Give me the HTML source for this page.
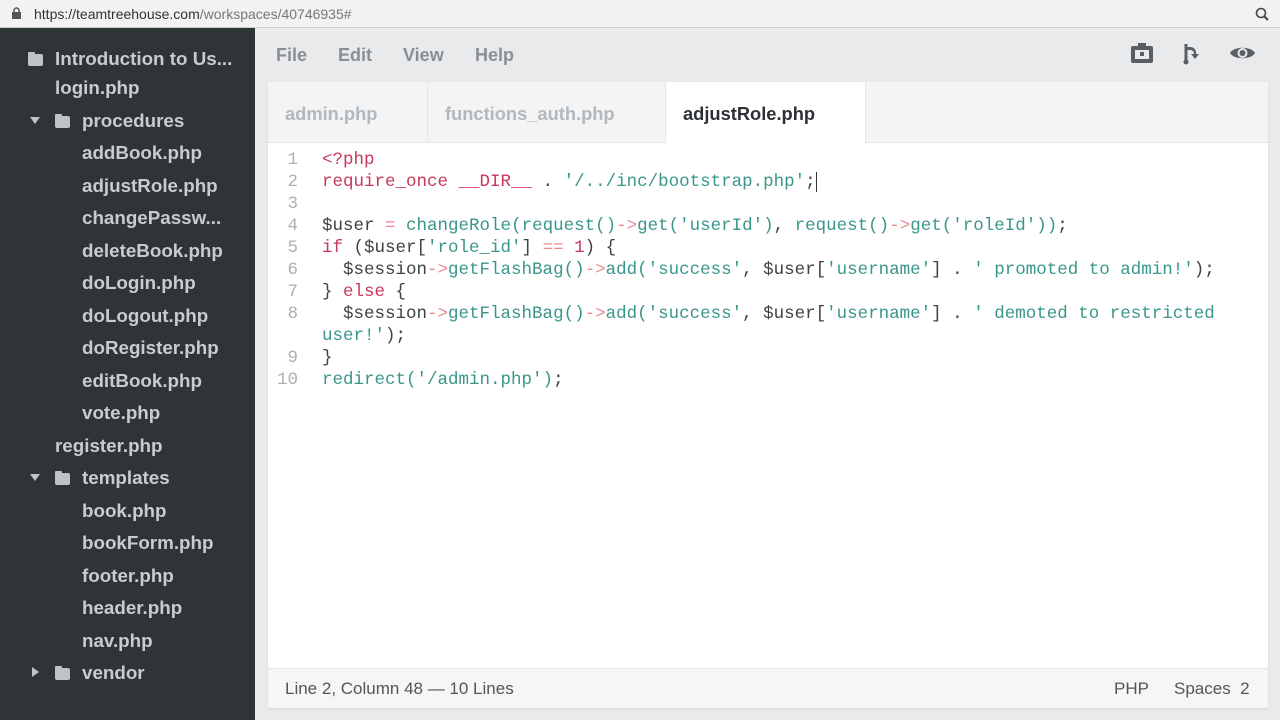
<!DOCTYPE html>
<html><head><meta charset="utf-8"><style>
*{margin:0;padding:0;box-sizing:border-box}
body{width:1280px;height:720px;overflow:hidden;background:#e8eaec;font-family:"Liberation Sans",sans-serif;position:relative}
#addr{position:absolute;left:0;top:0;width:1280px;height:28px;background:#f2f2f2;border-bottom:1px solid #cfcfcf;font-size:14px;color:#333}
#addr .u{position:absolute;left:34px;top:6px}
#addr .u span{color:#777}
#side{position:absolute;left:0;top:28px;width:255px;height:692px;background:#2f3437}
.it{position:absolute;color:#c9ccce;font-weight:bold;font-size:18.8px;white-space:nowrap}
.fold{position:absolute;width:15px;height:12px;background:#c0c3c5;border-radius:2px}
.fold:before{content:"";position:absolute;left:0;top:-2px;width:7px;height:3px;background:#c0c3c5;border-radius:1px 1px 0 0}
.tri{position:absolute;width:0;height:0}
.down{border-left:5px solid transparent;border-right:5px solid transparent;border-top:7px solid #c0c3c5}
.right{border-top:5px solid transparent;border-bottom:5px solid transparent;border-left:7px solid #c0c3c5}
.menu{position:absolute;top:45px;font-size:18px;color:#8a8f93;font-weight:bold}
#ed{position:absolute;left:268px;top:82px;width:1000px;height:626px;background:#fff;box-shadow:0 1px 2px rgba(0,0,0,.08)}
#tabs{position:absolute;left:0;top:0;width:1000px;height:61px;background:#f3f4f5;border-bottom:1px solid #e3e5e7}
.tab{position:absolute;top:0;height:61px;font-size:18.3px;font-weight:bold;color:#b4b8bb;padding-top:21px;border-right:1px solid #e3e5e7}
.tab.act{background:#fff;color:#2d3135;height:62px}
#code{position:absolute;left:0;top:67px;font-family:"Liberation Mono",monospace;font-size:17.5px;line-height:22px;color:#3d4246}
.ln{position:absolute;width:30px;text-align:right;color:#aab0b4}
.cl{position:absolute;left:54px;white-space:pre}
.k{color:#c7385b}.s{color:#3a968a}.f{color:#3a968a}.o{color:#e88a8f}
#status{position:absolute;left:0;top:586px;width:1000px;height:40px;background:#f6f6f6;border-top:1px solid #e8e8e8;font-size:17px;color:#555}
</style></head><body>
<div id="addr"><svg style="position:absolute;left:11px;top:7px" width="11" height="13"><rect x="1" y="5" width="9" height="7" fill="#555"/><path d="M3 5V3.5a2.5 2.5 0 0 1 5 0V5" stroke="#555" stroke-width="1.5" fill="none"/></svg><div class="u">https://teamtreehouse.com<span>/workspaces/40746935#</span></div>
<svg style="position:absolute;left:1255px;top:7px" width="14" height="14"><circle cx="6" cy="6" r="4.5" stroke="#444" stroke-width="1.6" fill="none"/><path d="M9.5 9.5L13 13" stroke="#444" stroke-width="2"/></svg></div>
<div id="side">
<div class="fold" style="left:28px;top:26px"></div><div class="it" style="left:55px;top:20px">Introduction to Us...</div>
<div class="it" style="left:55px;top:49px">login.php</div>
<div class="tri down" style="left:30px;top:89px"></div><div class="fold" style="left:55px;top:88px"></div><div class="it" style="left:82px;top:82px">procedures</div>
<div class="it" style="left:82px;top:114px">addBook.php</div>
<div class="it" style="left:82px;top:147px">adjustRole.php</div>
<div class="it" style="left:82px;top:179px">changePassw...</div>
<div class="it" style="left:82px;top:212px">deleteBook.php</div>
<div class="it" style="left:82px;top:244px">doLogin.php</div>
<div class="it" style="left:82px;top:277px">doLogout.php</div>
<div class="it" style="left:82px;top:309px">doRegister.php</div>
<div class="it" style="left:82px;top:342px">editBook.php</div>
<div class="it" style="left:82px;top:374px">vote.php</div>
<div class="it" style="left:55px;top:407px">register.php</div>
<div class="tri down" style="left:30px;top:446px"></div><div class="fold" style="left:55px;top:445px"></div><div class="it" style="left:82px;top:439px">templates</div>
<div class="it" style="left:82px;top:472px">book.php</div>
<div class="it" style="left:82px;top:504px">bookForm.php</div>
<div class="it" style="left:82px;top:537px">footer.php</div>
<div class="it" style="left:82px;top:569px">header.php</div>
<div class="it" style="left:82px;top:602px">nav.php</div>
<div class="tri right" style="left:32px;top:639px"></div><div class="fold" style="left:55px;top:640px"></div><div class="it" style="left:82px;top:634px">vendor</div>
</div>
<div class="menu" style="left:276px">File</div><div class="menu" style="left:338px">Edit</div><div class="menu" style="left:403px">View</div><div class="menu" style="left:475px">Help</div>
<svg style="position:absolute;left:1130px;top:42px" width="24" height="22"><rect x="1" y="4" width="22" height="17" rx="2" fill="#5a5f63"/><rect x="8" y="1" width="8" height="4" fill="#5a5f63"/><rect x="5" y="8" width="14" height="9" fill="#e8eaec"/><rect x="10" y="10" width="4" height="4" fill="#5a5f63"/></svg>
<svg style="position:absolute;left:1183px;top:42px" width="20" height="24"><path d="M3 2v18" stroke="#5a5f63" stroke-width="3"/><circle cx="3" cy="20" r="2.5" fill="#5a5f63"/><path d="M4 5h4a6 6 0 0 1 5 7l3 0-4 5-4-5h3a4 4 0 0 0-3-4H4z" fill="#5a5f63"/></svg>
<svg style="position:absolute;left:1229px;top:44px" width="27" height="18"><path d="M1 9C5 2 22 2 26 9C22 16 5 16 1 9Z" fill="#5a5f63"/><circle cx="13.5" cy="9" r="5" fill="#e8eaec"/><circle cx="13.5" cy="9" r="3" fill="#5a5f63"/></svg>
<div id="ed">
<div id="tabs">
<div class="tab" style="left:0;width:160px;padding-left:17px">admin.php</div>
<div class="tab" style="left:160px;width:238px;padding-left:17px">functions_auth.php</div>
<div class="tab act" style="left:398px;width:200px;padding-left:17px">adjustRole.php</div>
</div>
<div id="code">
<div class="ln" style="top:0">1</div><div class="cl" style="top:0"><span class="k">&lt;?php</span></div>
<div class="ln" style="top:22px">2</div><div class="cl" style="top:22px"><span class="k">require_once __DIR__ </span>. <span class="s">'/../inc/bootstrap.php'</span>;<span style="border-left:1.5px solid #333"></span></div>
<div class="ln" style="top:44px">3</div>
<div class="ln" style="top:66px">4</div><div class="cl" style="top:66px">$user <span class="o">=</span> <span class="f">changeRole(request()</span><span class="o">-&gt;</span><span class="f">get(</span><span class="s">'userId'</span><span class="f">)</span>, <span class="f">request()</span><span class="o">-&gt;</span><span class="f">get(</span><span class="s">'roleId'</span><span class="f">))</span>;</div>
<div class="ln" style="top:88px">5</div><div class="cl" style="top:88px"><span class="k">if</span> ($user[<span class="s">'role_id'</span>] <span class="o">==</span> <span class="k">1</span>) {</div>
<div class="ln" style="top:110px">6</div><div class="cl" style="top:110px">  $session<span class="o">-&gt;</span><span class="f">getFlashBag()</span><span class="o">-&gt;</span><span class="f">add(</span><span class="s">'success'</span>, $user[<span class="s">'username'</span>] . <span class="s">' promoted to admin!'</span>);</div>
<div class="ln" style="top:132px">7</div><div class="cl" style="top:132px">} <span class="k">else</span> {</div>
<div class="ln" style="top:154px">8</div><div class="cl" style="top:154px">  $session<span class="o">-&gt;</span><span class="f">getFlashBag()</span><span class="o">-&gt;</span><span class="f">add(</span><span class="s">'success'</span>, $user[<span class="s">'username'</span>] . <span class="s">' demoted to restricted</span></div>
<div class="cl" style="top:176px"><span class="s">user!'</span>);</div>
<div class="ln" style="top:198px">9</div><div class="cl" style="top:198px">}</div>
<div class="ln" style="top:220px">10</div><div class="cl" style="top:220px"><span class="f">redirect(</span><span class="s">'/admin.php'</span><span class="f">)</span>;</div>
</div>
<div id="status"><span style="position:absolute;left:17px;top:10px">Line 2, Column 48 — 10 Lines</span><span style="position:absolute;left:846px;top:10px">PHP</span><span style="position:absolute;left:906px;top:10px">Spaces&nbsp; 2</span></div>
</div>
</body></html>
